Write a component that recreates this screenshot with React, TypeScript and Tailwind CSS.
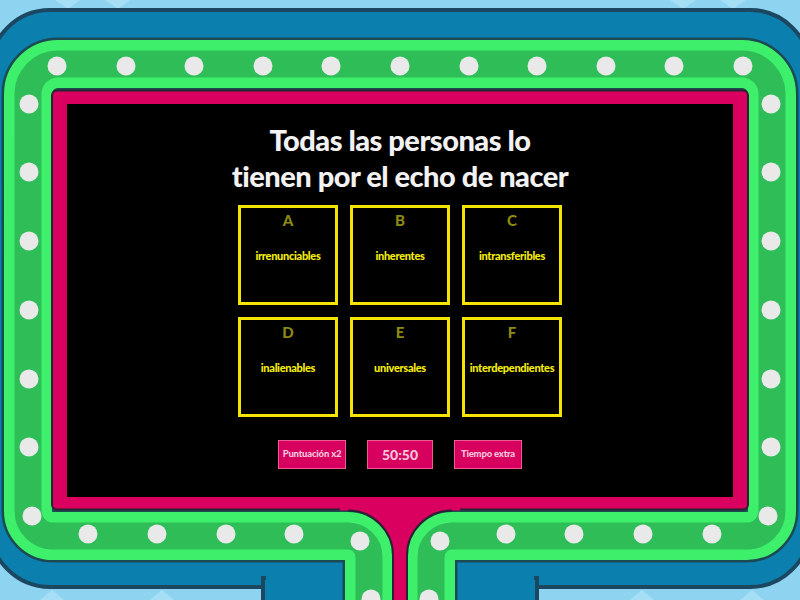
const dotsTop = [57, 126, 194, 263, 331, 400, 469, 537, 606, 674, 743];
const dotsSide = [104, 172, 241, 310, 379, 447];
const dotsBottom = [88, 157, 226, 294];

const answers = [
  { letter: "A", text: "irrenunciables" },
  { letter: "B", text: "inherentes" },
  { letter: "C", text: "intransferibles" },
  { letter: "D", text: "inalienables" },
  { letter: "E", text: "universales" },
  { letter: "F", text: "interdependientes" },
];

const tube =
  "M 369 612 L 369 557 A 21 21 0 0 0 348 536 L 53 536 A 25 25 0 0 1 28 511 L 28 94 A 30 30 0 0 1 58 64 L 742 64 A 30 30 0 0 1 772 94 L 772 511 A 25 25 0 0 1 747 536 L 452 536 A 21 21 0 0 0 431 557 L 431 612";

function Frame() {
  return (
    <svg className="absolute inset-0" width="800" height="600" viewBox="0 0 800 600">
      <rect width="800" height="600" fill="#8ed3f0" />
      {/* faint background shapes */}
      <g fill="#a6def5">
        <polygon points="55,0 68,9 80,0" />
        <polygon points="105,0 118,9 130,0" />
        <polygon points="670,0 683,9 696,0" />
        <polygon points="720,0 733,9 746,0" />
        <polygon points="40,600 52,590 64,600" />
        <polygon points="150,600 162,590 174,600" />
        <polygon points="630,600 642,590 654,600" />
        <polygon points="740,600 752,590 764,600" />
      </g>

      {/* outer blue frame and legs */}
      <rect x="-10" y="10" width="820" height="577" rx="60" fill="#0b7fae" stroke="#1c4760" strokeWidth="4" />
      <rect x="263" y="578" width="100" height="40" fill="#0b7fae" stroke="#1c4760" strokeWidth="4" />
      <rect x="437" y="578" width="100" height="40" fill="#0b7fae" stroke="#1c4760" strokeWidth="4" />
      <rect x="266" y="570" width="268" height="40" fill="#0b7fae" />

      {/* green light band */}
      <rect x="40" y="75" width="720" height="450" fill="#3def6b" />
      <path d={tube} fill="none" stroke="#1c4a52" strokeWidth="53" />
      <path d={tube} fill="none" stroke="#3def6b" strokeWidth="48" />
      <path d={tube} fill="none" stroke="#2fbd58" strokeWidth="27" />

      {/* pink screen rim and stem */}
      <rect x="52" y="90.5" width="696" height="419" rx="5" fill="#d9005f" stroke="#2a2233" strokeWidth="2" />
      <path
        d="M 340 500 L 460 500 L 460 510.5 L 452 510.5 A 45 45 0 0 0 407 555.5 L 407 612 L 393 612 L 393 555.5 A 45 45 0 0 0 348 510.5 L 340 510.5 Z"
        fill="#d9005f"
      />
      <path d="M 348 510.5 A 45 45 0 0 1 393 555.5 L 393 612" fill="none" stroke="#2a2233" strokeWidth="2" />
      <path d="M 452 510.5 A 45 45 0 0 0 407 555.5 L 407 612" fill="none" stroke="#2a2233" strokeWidth="2" />

      {/* bulbs */}
      <g fill="#e9e9e9">
        {dotsTop.map((x) => (
          <circle key={"t" + x} cx={x} cy={66} r={9.5} />
        ))}
        {dotsSide.map((y) => (
          <circle key={"l" + y} cx={29} cy={y} r={9.5} />
        ))}
        {dotsSide.map((y) => (
          <circle key={"r" + y} cx={771} cy={y} r={9.5} />
        ))}
        <circle cx={32} cy={516} r={9.5} />
        <circle cx={768} cy={516} r={9.5} />
        {dotsBottom.map((x) => (
          <circle key={"bl" + x} cx={x} cy={534} r={9.5} />
        ))}
        {dotsBottom.map((x) => (
          <circle key={"br" + x} cx={800 - x} cy={534} r={9.5} />
        ))}
        <circle cx={360} cy={541} r={9.5} />
        <circle cx={440} cy={541} r={9.5} />
        <circle cx={371} cy={599} r={9.5} />
        <circle cx={429} cy={599} r={9.5} />
      </g>
    </svg>
  );
}

export default function App() {
  return (
    <div className="relative w-[800px] h-[600px] overflow-hidden bg-[#8ed3f0] font-['Lato',sans-serif]">
      <Frame />

      <div className="relative px-[67px] pt-[104px]">
        <div className="h-[393px] bg-black flex flex-col items-center">
          {/* Question */}
          <h1 className="mt-[18px] text-center whitespace-nowrap text-[29px] leading-[36px] font-black tracking-[-0.5px] text-[#f2f2f2]">
            Todas las personas lo
            <br />
            tienen por el echo de nacer
          </h1>

          {/* Answers */}
          <div className="mt-[11px] grid grid-cols-[100px_100px_100px] gap-x-[12px] gap-y-[12px]">
            {answers.map((a) => (
              <div
                key={a.letter}
                className="h-[100px] border-[3px] border-[#f4e404] flex flex-col items-center pt-[3px]"
              >
                <span className="text-[15px] leading-[18px] font-black text-[#8d8a14]">{a.letter}</span>
                <span className="mt-[20px] whitespace-nowrap text-[11px] leading-[13px] font-black tracking-[-0.3px] text-[#f6ee0c]">
                  {a.text}
                </span>
              </div>
            ))}
          </div>

          {/* Power-ups */}
          <div className="mt-[23px] flex gap-[21px]">
            <button className="w-[68px] h-[29px] bg-[#d8005f] border border-[#ef5c95] whitespace-nowrap text-[9.5px] font-black tracking-[-0.2px] text-[#f8c6dc]">
              Puntuación x2
            </button>
            <button className="w-[66px] h-[29px] bg-[#d8005f] border border-[#ef5c95] text-[14px] font-black text-[#f8c6dc]">
              50:50
            </button>
            <button className="w-[68px] h-[29px] bg-[#d8005f] border border-[#ef5c95] whitespace-nowrap text-[9.5px] font-black tracking-[-0.2px] text-[#f8c6dc]">
              Tiempo extra
            </button>
          </div>
        </div>
      </div>
    </div>
  );
}
